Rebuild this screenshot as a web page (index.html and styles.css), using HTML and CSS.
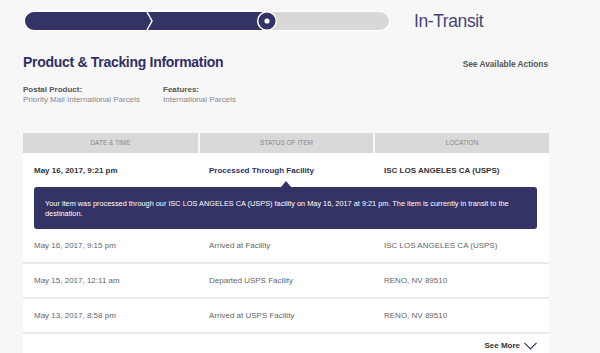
FILE: index.html
```html
<!DOCTYPE html>
<html>
<head>
    <meta charset="utf-8" />
    <title>Tracking</title>
    <link rel="stylesheet" href="styles.css">
</head>
<body>
    <div class="page">
        <div class="progress">
            <svg class="bar" width="366" height="24" viewBox="0 0 366 24">
                <rect x="0" y="2" width="366" height="20" rx="10" fill="#ffffff"/>
                <rect x="1" y="3" width="364" height="18" rx="9" fill="#d8d8d8"/>
                <path d="M10 3 H243 V21 H10 A9 9 0 0 1 10 3 Z" fill="#333366"/>
                <polyline points="123,3 128,12 123,21" fill="none" stroke="#ffffff" stroke-width="1.5"/>
                <circle cx="243" cy="12" r="9.3" fill="#333366" stroke="#ffffff" stroke-width="1.5"/>
                <circle cx="243" cy="12" r="2.6" fill="#ffffff"/>
            </svg>
            <span class="status-label">In-Transit</span>
        </div>

        <div class="title-row">
            <h2 class="title">Product &amp; Tracking Information</h2>
            <a class="actions">See Available Actions</a>
        </div>

        <div class="info">
            <div class="info-col">
                <div class="info-label">Postal Product:</div>
                <div class="info-value">Priority Mail International Parcels</div>
            </div>
            <div class="info-col">
                <div class="info-label">Features:</div>
                <div class="info-value">International Parcels</div>
            </div>
        </div>

        <div class="table">
            <div class="head">
                <div class="head-cell">Date &amp; Time</div>
                <div class="head-cell">Status of Item</div>
                <div class="head-cell">Location</div>
            </div>

            <div class="row current">
                <div class="cell">May 16, 2017, 9:21 pm</div>
                <div class="cell status">Processed Through Facility</div>
                <div class="cell">ISC LOS ANGELES CA (USPS)</div>
            </div>
            <div class="tip">Your item was processed through our ISC LOS ANGELES CA (USPS) facility on May 16, 2017 at 9:21 pm. The item is currently in transit to the destination.</div>

            <div class="row">
                <div class="cell">May 16, 2017, 9:15 pm</div>
                <div class="cell">Arrived at Facility</div>
                <div class="cell">ISC LOS ANGELES CA (USPS)</div>
            </div>
            <div class="row">
                <div class="cell">May 15, 2017, 12:11 am</div>
                <div class="cell">Departed USPS Facility</div>
                <div class="cell">RENO, NV 89510</div>
            </div>
            <div class="row">
                <div class="cell">May 13, 2017, 8:58 pm</div>
                <div class="cell">Arrived at USPS Facility</div>
                <div class="cell">RENO, NV 89510</div>
            </div>

            <div class="more">
                <span>See More</span>
                <svg width="13" height="8" viewBox="0 0 13 8"><polyline points="0.5,0.8 6.5,6.8 12.5,0.8" fill="none" stroke="#333366" stroke-width="1.2"/></svg>
            </div>
        </div>
    </div>
</body>
</html>
```

FILE: styles.css
```css
body {margin: 0; background-color: #f7f7f7; font-family: "Liberation Sans", Arial, sans-serif; color: #333;}

.page {
    width: 526px;
    padding-left: 23px;}

/* progress bar */
.progress {
    display: flex;
    align-items: center;
    height: 24px;
    margin-top: 9px;}
.bar {
    display: block;
    margin-left: 1px;}
.status-label {
    margin-left: 24px;
    font-size: 17.5px;
    letter-spacing: -0.4px;
    color: #44447a;}

/* title */
.title-row {
    display: flex;
    justify-content: space-between;
    align-items: baseline;
    margin-top: 21px;}
.title {
    margin: 0;
    font-size: 14px;
    line-height: 16px;
    letter-spacing: -0.3px;
    color: #2f2f66;}
.actions {
    margin-right: 1px;
    font-size: 8.3px;
    font-weight: bold;
    color: #555;}

.info {
    display: flex;
    margin-top: 15px;
    font-size: 8px;
    line-height: 10px;}
.info-col {width: 140px;}
.info-label {font-weight: bold; color: #555;}
.info-value {color: #888;}

/* table */
.table {
    margin-top: 28px;
    background-color: #fff;
    min-height: 230px;}
.head {
    display: grid;
    grid-template-columns: 175px 173px 174px;
    column-gap: 2px;
    background-color: #f7f7f7;}
.head-cell {
    height: 20px;
    line-height: 20px;
    text-align: center;
    background-color: #d9d9d9;
    font-size: 6.5px;
    text-transform: uppercase;
    color: #888;}

.row {
    display: grid;
    grid-template-columns: 175px 173px 174px;
    column-gap: 2px;
    align-items: center;
    height: 33px;
    border-bottom: 2px solid #e9e9e9;
    font-size: 8px;
    color: #666;}
.row.current {
    height: 34px;
    border-bottom: none;
    font-weight: bold;
    color: #333;}
.cell {padding-left: 9px;}
.cell:first-child {padding-left: 11px;}
.status {color: #2f2f66;}

.tip {
    position: relative;
    margin: 0 12px 0 11px;
    padding: 12px 11px 10px 11px;
    border-radius: 3px;
    background-color: #333366;
    color: #fff;
    font-size: 7.35px;
    line-height: 10px;}
.tip:before {
    content: '';
    position: absolute;
    top: -6px;
    left: 247px;
    border-left: 5px solid transparent;
    border-right: 5px solid transparent;
    border-bottom: 6px solid #333366;}

.more {
    display: flex;
    justify-content: flex-end;
    align-items: center;
    gap: 4px;
    height: 23px;
    padding-right: 12px;
    font-size: 8px;
    font-weight: bold;
    color: #333;}
.more svg {display: block;}
```
